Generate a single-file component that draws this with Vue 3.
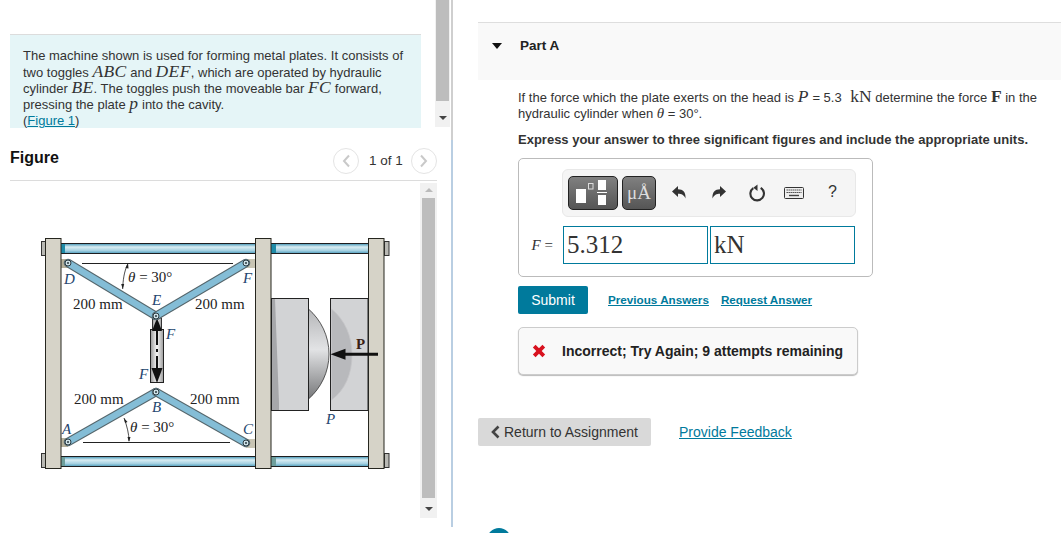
<script setup>
const rods = [
  { y: 243, x: 61, w: 194 },
  { y: 243, x: 271, w: 97 },
  { y: 456, x: 61, w: 194 },
  { y: 456, x: 271, w: 97 },
]
const bolts = [
  { x: 41, y: 241 },
  { x: 41, y: 453 },
  { x: 384, y: 241 },
  { x: 384, y: 453 },
]
const posts = [45, 255, 368]
const links = [
  { x1: 68, y1: 263, x2: 156, y2: 316 },
  { x1: 246, y1: 263, x2: 156, y2: 316 },
  { x1: 68, y1: 442, x2: 156, y2: 392 },
  { x1: 246, y1: 443, x2: 156, y2: 392 },
]
const pins = [
  [68, 263],
  [246, 263],
  [156, 316],
  [156, 392],
  [68, 442],
  [246, 443],
]
const dims = [
  [73, 309],
  [195, 309],
  [74, 404],
  [190, 404],
]
const letters = [
  ['D', 64, 284],
  ['E', 152, 305],
  ['F', 243, 283],
  ['F', 166, 339],
  ['F', 139, 379],
  ['A', 62, 434],
  ['B', 152, 412],
  ['C', 243, 434],
  ['P', 326, 424],
]
</script>

<template>
  <div class="page">
    <section class="left">
      <div class="prompt-row">
        <div class="prompt">
          The machine shown is used for forming metal plates. It consists of two toggles
          <i class="m tall">ABC</i> and <i class="m">DEF</i>, which are operated by hydraulic cylinder
          <i class="m">BE</i>. The toggles push the moveable bar <i class="m">FC</i> forward,
          pressing the plate <i class="m">p</i> into the cavity.<br />
          (<a class="fig-link">Figure 1</a>)
        </div>
        <div class="bar bar-top">
          <div class="thumb thumb-top"></div>
          <span class="arr down"></span>
        </div>
      </div>

      <div class="fig-head">
        <strong class="fig-title">Figure</strong>
        <div class="pager">
          <span class="circle">
            <svg width="10" height="14" viewBox="0 0 10 14"><path d="M8 1.500 3 7l5 5.500" fill="none" stroke="#c9c9c9" stroke-width="2" /></svg>
          </span>
          <span class="count">1 of 1</span>
          <span class="circle">
            <svg width="10" height="14" viewBox="0 0 10 14"><path d="M2 1.500 7 7l-5 5.500" fill="none" stroke="#c9c9c9" stroke-width="2" /></svg>
          </span>
        </div>
      </div>

      <div class="fig-body">
        <svg class="diagram" width="410" height="337" viewBox="10 183 410 337">
          <defs>
            <linearGradient id="rod" x1="0" y1="0" x2="0" y2="1">
              <stop offset="0" stop-color="#3f93b4" />
              <stop offset=".35" stop-color="#d9edf3" />
              <stop offset=".7" stop-color="#a7d2e2" />
              <stop offset="1" stop-color="#4f9dbd" />
            </linearGradient>
            <linearGradient id="cyl" x1="0" y1="0" x2="1" y2="0">
              <stop offset="0" stop-color="#9a9a9a" />
              <stop offset=".5" stop-color="#f8f8f8" />
              <stop offset="1" stop-color="#9a9a9a" />
            </linearGradient>
            <linearGradient id="dome" x1="0" y1="0" x2="0" y2="1">
              <stop offset="0" stop-color="#b5b6b8" />
              <stop offset=".45" stop-color="#e2e3e5" />
              <stop offset="1" stop-color="#77787a" />
            </linearGradient>
          </defs>

          <g v-for="(r, i) in rods" :key="'r' + i">
            <rect :x="r.x + 0.5" :y="r.y + 0.5" :width="r.w" height="10" fill="url(#rod)" stroke="#1d1d1f" stroke-width="1" />
          </g>
          <rect x="271" y="244" width="5" height="9" fill="#1f8ba8" />
          <rect x="271" y="457" width="5" height="9" fill="#6e9f9c" />
          <rect x="61" y="244" width="4" height="9" fill="#1f8ba8" />
          <rect x="61" y="457" width="4" height="9" fill="#6e9f9c" />

          <g v-for="(b, i) in bolts" :key="'b' + i">
            <rect :x="b.x + 0.5" :y="b.y + 0.5" width="4.500" height="14" fill="#b9b9b4" stroke="#333" stroke-width="1" />
          </g>

          <line x1="82" y1="263.500" x2="233" y2="263.500" stroke="#222" />
          <line x1="83" y1="442.500" x2="230" y2="442.500" stroke="#222" />

          <rect x="61" y="259" width="7" height="9" fill="#b5b09a" />
          <rect x="61" y="438" width="7" height="9" fill="#b5b09a" />
          <rect x="246" y="259" width="9" height="9" fill="#c9c5b4" />
          <rect x="246" y="439" width="9" height="9" fill="#c9c5b4" />

          <rect v-for="x in posts" :key="x" :x="x + 0.5" y="238.500" width="15.500" height="230" fill="#d6d3c8" stroke="#26261f" stroke-width="1" />

          <rect x="152.500" y="318" width="9" height="12" fill="url(#cyl)" stroke="#333" />
          <rect x="150.500" y="329.500" width="13" height="53" fill="url(#cyl)" stroke="#222" />
          <path d="M157 345V328" stroke="#111" stroke-width="2" />
          <path d="M157 318l-5 13h10z" fill="#111" />
          <path d="M157 349v3" stroke="#111" stroke-width="2" />
          <path d="M157 356v14" stroke="#111" stroke-width="2" />
          <path d="M157 383l-5.500 -15h11z" fill="#111" />

          <g v-for="(l, i) in links" :key="'l' + i">
            <line :x1="l.x1" :y1="l.y1" :x2="l.x2" :y2="l.y2" stroke="#55666c" stroke-width="8.500" stroke-linecap="round" />
            <line :x1="l.x1" :y1="l.y1" :x2="l.x2" :y2="l.y2" stroke="#84bdd6" stroke-width="6.500" stroke-linecap="round" />
          </g>
          <g v-for="(p, i) in pins" :key="'p' + i">
            <circle :cx="p[0]" :cy="p[1]" r="3" fill="#cfe2e8" stroke="#2b3a40" stroke-width="1" />
            <circle :cx="p[0]" :cy="p[1]" r="1" fill="#2b3a40" />
          </g>

          <path d="M127.700 264C124 272 123 280 122.700 289" fill="none" stroke="#222" stroke-width=".8" />
          <path d="M124 418C127 426 129 434 129 441" fill="none" stroke="#222" stroke-width=".8" />
          <path d="M128 263l-2.500 5 3 .5zM122.700 289l-1.500-5 3 0zM124 418l1 5 2.500-1zM129 442l-1.500-5 3 0z" fill="#222" />

          <path d="M308.500 309C321 320 329 336 329 354C329 372 321 388 308.500 399Z" fill="url(#dome)" stroke="#333" stroke-width=".8" />
          <rect x="271.500" y="298.500" width="37" height="112" fill="#d2d3d5" stroke="#222" />
          <path d="M272 299h3l4 104v7h-7z" fill="#a6a7aa" />
          <rect x="330.500" y="298.500" width="37.500" height="112" fill="#d2d3d5" stroke="#222" />
          <path d="M331.500 309C345 320 352 336 352 355C352 374 345 390 331.500 400Z" fill="#b8b9bc" stroke="#c6c7c9" stroke-width=".8" />
          <line x1="378" y1="354.300" x2="344" y2="354.300" stroke="#111" stroke-width="3" />
          <path d="M330.500 354.300l15-5.500v11z" fill="#111" />

          <text v-for="(d, i) in dims" :key="'d' + i" :x="d[0]" :y="d[1]" class="lbl">200 mm</text>
          <text x="128" y="282" class="lbl"><tspan class="it">θ</tspan> = 30°</text>
          <text x="130" y="432" class="lbl"><tspan class="it">θ</tspan> = 30°</text>
          <text v-for="(t, i) in letters" :key="'t' + i" :x="t[1]" :y="t[2]" class="lbl it blue">{{ t[0] }}</text>
          <text x="356" y="349" class="lbl bold">P</text>
        </svg>
        <div class="bar bar-fig">
          <span class="arr up"></span>
          <div class="thumb thumb-fig"></div>
          <span class="arr down"></span>
        </div>
      </div>
    </section>

    <div class="divider"></div>

    <section class="right">
      <header class="part">
        <span class="tri"></span>
        <strong>Part A</strong>
      </header>

      <div class="content">
        <p class="q">
          If the force which the plate exerts on the head is <i class="m">P</i> = 5.3
          <span class="u kn">kN</span> determine the force <b class="u">F</b> in the hydraulic cylinder when
          <i class="th">θ</i> = 30°.
        </p>
        <p class="exp">Express your answer to three significant figures and include the appropriate units.</p>

        <div class="answer">
          <div class="toolbar">
            <span class="tbtn t1">
              <svg width="40" height="28" viewBox="0 0 40 28">
                <rect x="3" y="10" width="10" height="14" fill="#fff" />
                <rect x="15.500" y="4.500" width="4.500" height="5.500" fill="none" stroke="#ddd" />
                <rect x="25" y="1" width="8" height="10" fill="#fff" />
                <rect x="24" y="13" width="10" height="1" fill="#fff" />
                <rect x="25" y="16" width="8" height="10" fill="#fff" />
              </svg>
            </span>
            <span class="tbtn t2">μÅ</span>
            <svg class="ic i1" width="16" height="16" viewBox="0 0 16 16"><path d="M1 6.500 7 1v3.200c5 0 8 3 7.500 9.300C13 9.800 10.500 8.700 7 8.700V12Z" fill="#333" /></svg>
            <svg class="ic i2" width="16" height="16" viewBox="0 0 16 16"><path d="M15 6.500 9 1v3.200c-5 0-8 3-7.500 9.300C3 9.800 5.500 8.700 9 8.700V12Z" fill="#333" /></svg>
            <svg class="ic i3" width="18" height="18" viewBox="0 0 17 17"><path d="M12 3.600A6.400 6.400 0 1 1 5 3.800" fill="none" stroke="#333" stroke-width="2" /><path d="M9 .5v6L5 3.500Z" fill="#333" /></svg>
            <svg class="ic i4" width="20" height="12" viewBox="0 0 20 12"><rect x=".5" y=".5" width="19" height="11" rx="1" fill="#eee" stroke="#333" /><path d="M2.500 3h15M2.500 5.500h15" stroke="#444" stroke-width="1.200" stroke-dasharray="1.400 .6" /><path d="M5 8.500h10" stroke="#444" stroke-width="1.400" /></svg>
            <span class="help">?</span>
          </div>
          <div class="inputs">
            <span class="flabel"><i>F</i> =</span>
            <span class="field f1">5.312</span>
            <span class="field f2">kN</span>
          </div>
        </div>

        <div class="actions">
          <button class="submit">Submit</button>
          <a class="act first">Previous Answers</a>
          <a class="act">Request Answer</a>
        </div>

        <div class="result">
          <svg width="14" height="14" viewBox="0 0 14 14"><path d="M2.200 2.200 11.800 11.800M11.800 2.200 2.200 11.800" stroke="#d8121f" stroke-width="3.800" /></svg>
          <strong>Incorrect; Try Again; 9 attempts remaining</strong>
        </div>
      </div>

      <div class="bottom">
        <button class="back">
          <svg width="9" height="14" viewBox="0 0 9 14"><path d="M7.500 1.500 2 7l5.500 5.500" fill="none" stroke="#444" stroke-width="2.600" /></svg>
          Return to Assignment
        </button>
        <a class="feedback">Provide Feedback</a>
      </div>
      <span class="dot"></span>
    </section>
  </div>
</template>

<style>
html, body { margin: 0; background: #fff; overflow: hidden; }
</style>

<style scoped>
.page {
  width: 1061px;
  height: 533px;
  display: flex;
  align-items: flex-start;
  overflow: hidden;
  font-family: "Liberation Sans", Arial, sans-serif;
  font-size: 13px;
  color: #333;
  background: #fff;
}
.left { width: 440px; margin-left: 10px; flex: none; }
.divider {
  width: 2px;
  height: 527px;
  flex: none;
  margin-left: 1px;
  background: linear-gradient(#cfcfcf 140px, #b9cee2 140px);
}
.prompt-row { display: flex; height: 128px; align-items: flex-start; }
.prompt {
  width: 398px;
  height: 80px;
  margin-top: 34px;
  padding: 13px 0 0 13px;
  background: #e5f5f7;
  border-top: 1px solid #dcdcdc;
  line-height: 16px;
  overflow: hidden;
  color: #333;
}
.m { font-family: "Liberation Serif", serif; font-size: 17.500px; letter-spacing: .4px; color: #333; line-height: 0; }
.m.tall { line-height: 15px; }
.fig-link { color: #007a9c; text-decoration: underline; }
.bar { background: #f1f1f1; position: relative; flex: none; }
.bar-top { width: 15px; height: 127px; margin-left: 14px; padding: 0 1px; box-sizing: border-box; }
.thumb { background: #bdbdbd; }
.thumb-top { height: 101px; }
.arr { position: absolute; left: 50%; margin-left: -4px; border-left: 4px solid transparent; border-right: 4px solid transparent; }
.arr.down { border-top: 4px solid #444; bottom: 7px; }
.arr.up { border-bottom: 4px solid #bbb; top: 5px; }

.fig-head {
  width: 427px;
  height: 52px;
  display: flex;
  justify-content: space-between;
  align-items: center;
  border-bottom: 1px solid #dcdcdc;
}
.fig-title { font-size: 16px; color: #111; margin-top: 8px; }
.pager { display: flex; align-items: center; margin-top: 13px; }
.circle {
  width: 24px;
  height: 24px;
  border: 1px solid #e4e4e4;
  border-radius: 50%;
  display: flex;
  align-items: center;
  justify-content: center;
}
.count { font-size: 13.500px; width: 32px; margin: 0 10px; white-space: nowrap; color: #333; }

.fig-body { display: flex; padding-top: 2px; align-items: flex-start; }
.diagram { display: block; flex: none; }
.bar-fig { width: 17px; height: 335px; padding: 15px 2px 0 2px; box-sizing: border-box; }
.thumb-fig { height: 300px; }
.lbl { font-family: "Liberation Serif", serif; font-size: 15px; fill: #222; }
.it { font-style: italic; }
.blue { fill: #24456e; }
.bold { font-weight: bold; fill: #3a1f14; }

.right { flex: 1; min-width: 0; margin-left: 25px; margin-top: 22px; position: relative; height: 511px; }
.part {
  height: 58px;
  background: #f9f9f9;
  border-top: 1px solid #dedede;
  position: relative;
  padding: 15px 0 0 42px;
  box-sizing: border-box;
  font-size: 13.500px;
  color: #222;
}
.tri {
  position: absolute;
  left: 14px;
  top: 20px;
  border-left: 5px solid transparent;
  border-right: 5px solid transparent;
  border-top: 6px solid #111;
}
.content { padding-left: 40px; }
.q { margin: 10px 0 0; line-height: 16px; width: 530px; color: #333; }
.u { font-family: "Liberation Serif", serif; font-size: 17.500px; line-height: 0; }
.kn { margin-left: 5px; }
.th { font-family: "Liberation Serif", serif; font-size: 15px; line-height: 0; }
.exp { margin: 10px 0 0; font-weight: bold; font-size: 13px; line-height: 16px; color: #333; }

.answer {
  width: 355px;
  height: 119px;
  margin-top: 10px;
  box-sizing: border-box;
  border: 1px solid #bbb;
  border-radius: 5px;
  padding: 10px 16px 0 0;
  display: flex;
  flex-direction: column;
  align-items: flex-end;
}
.toolbar {
  width: 294px;
  height: 48px;
  box-sizing: border-box;
  background: #f5f5f5;
  border: 1px solid #e8e8e8;
  border-radius: 6px;
  display: flex;
  align-items: center;
  padding: 0 0 0 5px;
}
.tbtn {
  height: 34px;
  box-sizing: border-box;
  border: 1px solid #222;
  border-radius: 5px;
  background: linear-gradient(#808080, #555);
  display: flex;
  align-items: center;
  justify-content: center;
}
.t1 { width: 50px; }
.t2 { width: 34px; margin-left: 4px; font-family: "Liberation Serif", serif; font-size: 19px; color: #ddd; }
.ic { flex: none; }
.i1 { margin-left: 15px; }
.i2 { margin-left: 24px; }
.i3 { margin-left: 21px; }
.i4 { margin-left: 18px; }
.help { margin-left: 24px; margin-top: -2px; font-size: 16px; color: #333; }
.inputs { display: flex; align-items: center; margin-top: 9px; margin-right: 1px; }
.flabel { font-family: "Liberation Serif", serif; font-size: 15px; margin-right: 10px; color: #333; }
.field {
  height: 38px;
  box-sizing: border-box;
  border: 1px solid #007a9c;
  font-family: "Liberation Serif", serif;
  font-size: 25px;
  line-height: 36px;
  padding-left: 3px;
  color: #333;
}
.f1 { width: 145px; }
.f2 { width: 145px; margin-left: 2px; }

.actions { display: flex; align-items: center; margin-top: 9px; }
.submit {
  width: 70px;
  height: 28px;
  border: 0;
  border-radius: 2px;
  background: #007a9c;
  color: #fff;
  font-family: inherit;
  font-size: 14px;
  padding: 0;
}
.act { color: #007a9c; text-decoration: underline; font-weight: bold; font-size: 11.700px; margin-left: 12px; margin-top: -1px; }
.act.first { margin-left: 20px; }

.result {
  width: 340px;
  height: 48px;
  margin-top: 13px;
  box-sizing: border-box;
  background: #f9f9f9;
  border: 1px solid #ccc;
  border-radius: 5px;
  box-shadow: 0 1px 1px #bbb;
  display: flex;
  align-items: center;
  padding-left: 13px;
  font-size: 14px;
  color: #222;
}
.result strong { margin-left: 16px; }

.bottom { display: flex; align-items: center; margin-top: 43px; }
.back {
  width: 173px;
  height: 28px;
  border: 0;
  border-radius: 2px;
  background: #d9d9d9;
  font-family: inherit;
  font-size: 14px;
  color: #333;
  display: flex;
  align-items: center;
  gap: 4px;
  padding: 0 0 0 13px;
}
.feedback { margin-left: 28px; font-size: 14px; color: #007a9c; text-decoration: underline; }
.dot {
  position: absolute;
  left: 9px;
  top: 506px;
  width: 24px;
  height: 24px;
  border-radius: 50%;
  background: #007a9c;
}
</style>
